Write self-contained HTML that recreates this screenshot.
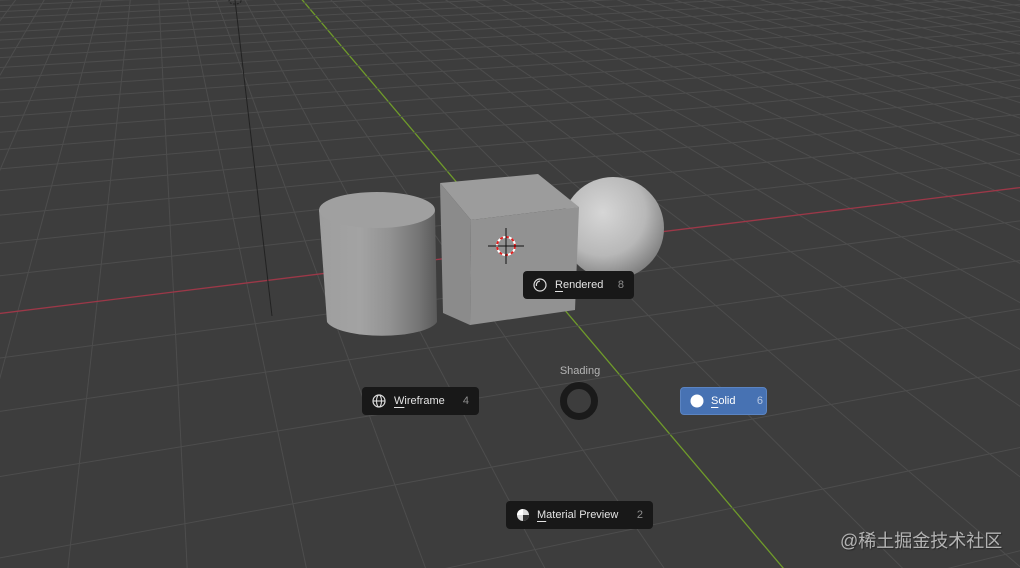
<!DOCTYPE html>
<html><head><meta charset="utf-8">
<style>
html,body{margin:0;padding:0;width:1020px;height:568px;overflow:hidden;background:#3d3d3d;font-family:"Liberation Sans","Noto Sans CJK SC",sans-serif}
svg{position:absolute;left:0;top:0}
.btn{position:absolute;height:28px;background:#181818;border-radius:4px;color:#e4e4e4;font-size:11px;line-height:28px;box-sizing:border-box}
.btn .ic{position:absolute;left:10px;top:7px}
.btn .t{position:absolute;left:32px}
.btn .n{position:absolute;right:10px;color:#8e8e8e}
.u{text-decoration:underline;text-underline-offset:3px}
</style></head><body>
<svg id="g" width="1020" height="568" viewBox="0 0 1020 568"></svg>
<svg width="1020" height="568" viewBox="0 0 1020 568">
  <line x1="235" y1="0" x2="272" y2="316" stroke="#222" stroke-width="1"/>
  <ellipse cx="235" cy="1" rx="6" ry="3" fill="none" stroke="#222" stroke-dasharray="2 1.5"/>
  <defs>
    <linearGradient id="cyl" x1="0" x2="1">
      <stop offset="0" stop-color="#9e9e9e"/><stop offset=".35" stop-color="#a3a3a3"/>
      <stop offset=".6" stop-color="#929292"/><stop offset=".85" stop-color="#747474"/><stop offset="1" stop-color="#5a5a5a"/>
    </linearGradient>
    <radialGradient id="sph" cx=".4" cy=".35" r=".7">
      <stop offset="0" stop-color="#d6d6d6"/><stop offset=".6" stop-color="#b8b8b8"/><stop offset="1" stop-color="#7a7a7a"/>
    </radialGradient>
  </defs>
  <!-- sphere -->
  <circle cx="613" cy="228" r="51" fill="url(#sph)"/>
  <!-- cylinder -->
  <path d="M319 210 L327 322 A56 17 0 0 0 437 322 L435 210 Z" fill="url(#cyl)"/>
  <ellipse cx="377" cy="210" rx="58" ry="18" fill="#a0a0a0"/>
  <!-- cube -->
  <polygon points="440,183 538,174 579,207 471,220" fill="#9c9c9c"/>
  <polygon points="440,183 471,220 470,325 443,313" fill="#8b8b8b"/>
  <polygon points="471,220 579,207 575,310 470,325" fill="#929292"/>
  <!-- cursor -->
  <circle cx="506" cy="246" r="9" fill="none" stroke="#fff" stroke-width="2"/>
  <circle cx="506" cy="246" r="9" fill="none" stroke="#e02020" stroke-width="2" stroke-dasharray="3 3"/>
  <line x1="506" y1="228" x2="506" y2="264" stroke="#111"/><line x1="488" y1="246" x2="524" y2="246" stroke="#111"/>
  <!-- shading ring -->
  <circle cx="579" cy="401" r="15.5" fill="none" stroke="#1a1a1a" stroke-width="7"/>
  <text x="580" y="374" fill="#b4b4b4" font-size="11" text-anchor="middle" font-family="Liberation Sans,sans-serif">Shading</text>
</svg>

<div class="btn" style="left:523px;top:271px;width:111px">
  <svg class="ic" width="14" height="14" viewBox="0 0 14 14"><circle cx="7" cy="7" r="6" fill="none" stroke="#ddd" stroke-width="1.2"/><path d="M3.5 8 A4 4 0 0 1 7 3" fill="none" stroke="#ddd" stroke-width="1.2"/></svg>
  <span class="t"><span class="u">R</span>endered</span><span class="n">8</span></div>
<div class="btn" style="left:362px;top:387px;width:117px">
  <svg class="ic" width="14" height="14" viewBox="0 0 14 14"><circle cx="7" cy="7" r="6" fill="none" stroke="#ddd" stroke-width="1.2"/><line x1="1" y1="7" x2="13" y2="7" stroke="#ddd" stroke-width="1.1"/><ellipse cx="7" cy="7" rx="2.5" ry="6" fill="none" stroke="#ddd" stroke-width="1.1"/></svg>
  <span class="t"><span class="u">W</span>ireframe</span><span class="n">4</span></div>
<div class="btn" style="left:680px;top:387px;width:87px;background:#4772b3;border:1px solid #5b84c2;line-height:26px">
  <svg class="ic" width="14" height="14" viewBox="0 0 14 14" style="top:6px;left:9px"><circle cx="7" cy="7" r="6.5" fill="#fff"/></svg>
  <span class="t" style="left:30px;color:#fff"><span class="u">S</span>olid</span><span class="n" style="color:#b8c8e2;right:3px">6</span></div>
<div class="btn" style="left:506px;top:501px;width:147px">
  <svg class="ic" width="14" height="14" viewBox="0 0 14 14"><circle cx="7" cy="7" r="6" fill="#ddd"/><path d="M7 7 L13 7 A6 6 0 0 1 7 13 Z" fill="#333"/><path d="M7 7 L7 1 A6 6 0 0 0 1 7 Z" fill="#fff"/></svg>
  <span class="t" style="left:31px"><span class="u">M</span>aterial Preview</span><span class="n">2</span></div>

<div style="position:absolute;left:840px;top:527px;font-size:18px;color:#c8c8c8;opacity:.85;text-shadow:1px 1px 1px #222;font-family:'Liberation Sans','Noto Sans CJK SC',sans-serif">@稀土掘金技术社区</div>

<script>
(function(){
var w1=0.0178,w2=0.075,V2=[4000,-180],V1=[150,-180],O=[514,250];
function P(u,v){var d=w1*u+w2*v+1;return [(w1*u*V2[0]+w2*v*V1[0]+O[0])/d,(w1*u*V2[1]+w2*v*V1[1]+O[1])/d,d];}
var s='',g=document.getElementById('g');
function ln(a,b,c,wd){s+='<line x1="'+a[0].toFixed(1)+'" y1="'+a[1].toFixed(1)+'" x2="'+b[0].toFixed(1)+'" y2="'+b[1].toFixed(1)+'" stroke="'+c+'" stroke-width="'+wd+'"/>';}
var VMAX=400;
for(var u=-60;u<=60;u++){
  var v0=-10; var v1=VMAX;
  // ensure denom positive
  var vmin=(-1-w1*u)/w2+0.3; if(v0<vmin)v0=vmin;
  if(v0>=v1)continue;
  ln(P(u,v0),P(u,v1),u==0?'#6f9b2a':'#4d4d4d',u==0?1.3:1);
}
for(var v=-8;v<=120;v++){
  var umin=(-1-w2*v)/w1+0.5, umax=80;
  if(umin<-300)umin=-300;
  ln(P(umin,v),P(umax,v),v==0?'#9c3848':'#4d4d4d',v==0?1.3:1);
}
g.innerHTML=s;
})();
</script>
</body></html>
